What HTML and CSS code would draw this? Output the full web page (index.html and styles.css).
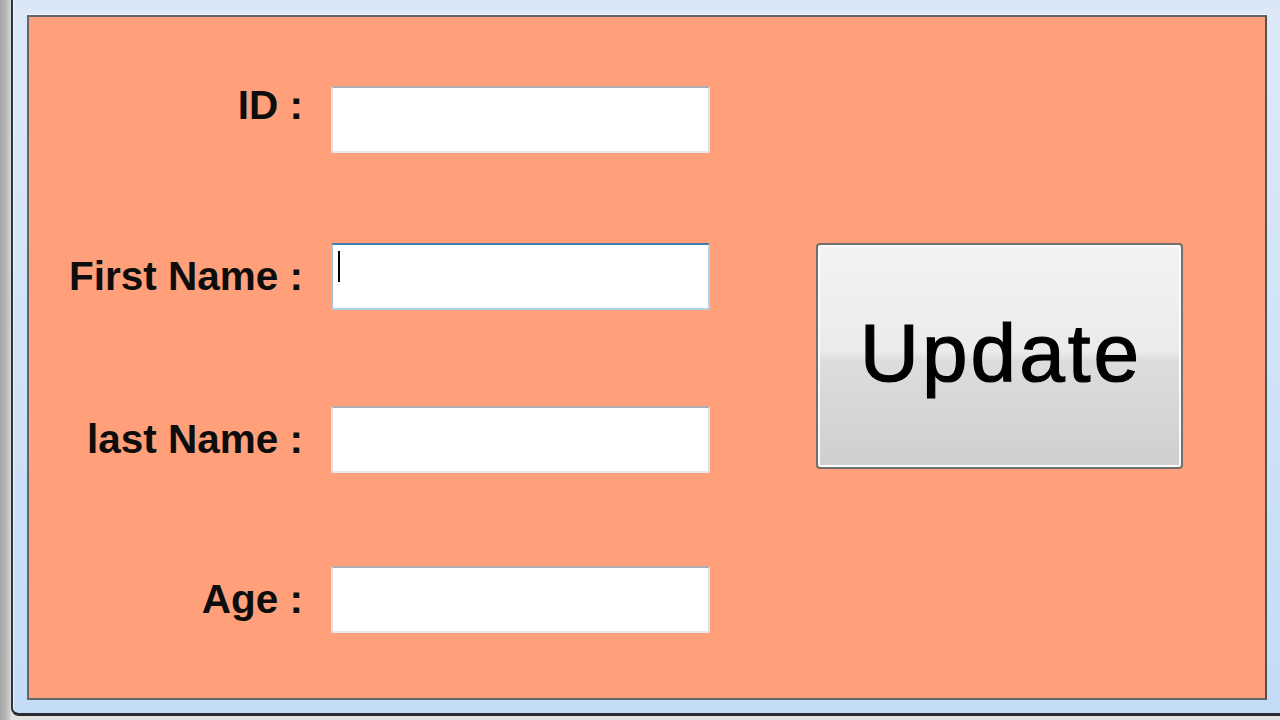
FILE: index.html
```html
<!DOCTYPE html>
<html>
<head>
<meta charset="utf-8">
<link rel="stylesheet" href="styles.css">
</head>
<body>
<div class="window">
  <div class="client">
    <div class="form">
      <div class="row row-id">
        <div class="label label-id">ID :</div>
        <div class="textbox"></div>
      </div>
      <div class="row row-first">
        <div class="label">First Name :</div>
        <div class="textbox focused"><span class="caret"></span></div>
      </div>
      <div class="row row-last">
        <div class="label">last Name :</div>
        <div class="textbox"></div>
      </div>
      <div class="row row-age">
        <div class="label">Age :</div>
        <div class="textbox"></div>
      </div>
    </div>
    <div class="side">
      <button class="update">Update</button>
    </div>
  </div>
</div>
</body>
</html>
```

FILE: styles.css
```css
html, body {
  margin: 0;
  padding: 0;
  width: 1280px;
  height: 720px;
  overflow: hidden;
}
body {
  background: linear-gradient(90deg, #a4a4a4 0px, #b8b8b8 6px, #cfcfcf 10px, #e2e2e2 11px);
  font-family: "Liberation Sans", Arial, sans-serif;
  padding-left: 11px;
  box-sizing: border-box;
}
.window {
  width: 1290px;
  height: 716px;
  box-sizing: border-box;
  border-left: 2px solid #2f3338;
  border-bottom: 3px solid #2a2e33;
  border-bottom-left-radius: 8px;
  background: linear-gradient(180deg, #d8e6f5 0px, #dde9f7 14px, #d2e4f7 300px, #c3dcf6 716px);
  padding: 15px 0 11px 14px;
  box-shadow: inset 1px 0 0 #f2f7fc;
}
.client {
  width: 1240px;
  height: 685px;
  box-sizing: border-box;
  background: #ffa07a;
  border: 2px solid #5f666d;
  border-right-color: #4f5356;
  box-shadow: 0 -1px 0 #f4f8fc;
  display: flex;
  align-items: flex-start;
}
.form {
  display: flex;
  flex-direction: column;
  padding-top: 69px;
}
.row {
  display: flex;
  align-items: center;
}
.row-id { align-items: flex-start; }
.row-first { margin-top: 90px; }
.row-last { margin-top: 96px; }
.row-age { margin-top: 93px; }
.label {
  width: 274px;
  text-align: right;
  font-weight: bold;
  font-size: 40.5px;
  line-height: 1;
  color: #0d0d0d;
  margin-right: 28px;
  white-space: nowrap;
}
.label-id {
  margin-top: -1px;
}
.textbox {
  width: 379px;
  height: 67px;
  box-sizing: border-box;
  background: #ffffff;
  border: 2px solid #e2e3ea;
  border-top-color: #abadb3;
  border-bottom-color: #e3e9ef;
  border-radius: 2px;
  padding: 6px 5px;
}
.textbox.focused {
  border-color: #b5cfe7;
  border-top-color: #3d7bad;
  border-left-color: #a4c3df;
}
.caret {
  display: block;
  width: 2px;
  height: 31px;
  background: #000;
}
.side {
  margin-left: 106px;
  padding-top: 226px;
}
.update {
  width: 367px;
  height: 226px;
  box-sizing: border-box;
  border: 2px solid #707070;
  border-radius: 4px;
  background: linear-gradient(180deg, #f3f3f3 0%, #ebebeb 48%, #dddddd 52%, #cfcfcf 100%);
  box-shadow: inset 0 0 0 2px #fbfbfb;
  font-family: "Liberation Sans", Arial, sans-serif;
  font-size: 82px;
  letter-spacing: 3px;
  -webkit-text-stroke: 1.2px #000;
  color: #000;
  padding: 0 0 6px 3px;
  margin: 0;
}
```
